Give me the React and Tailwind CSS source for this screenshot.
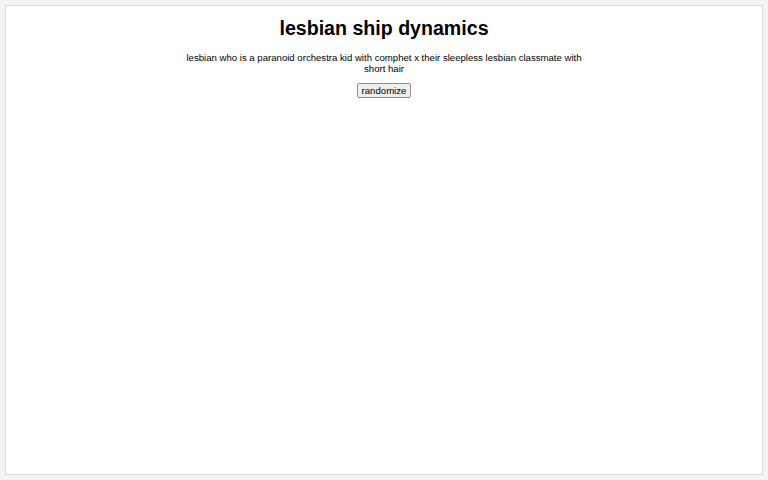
import React, { useState } from "react";

const traits = [
  "paranoid orchestra kid with comphet",
  "sleepless lesbian classmate with short hair",
];

export default function App() {
  const [pair] = useState(traits);
  const line = `lesbian who is a ${pair[0]} x their ${pair[1]}`;

  return (
    <div className="h-[480px] bg-[#f3f3f3] p-[5px] font-['Liberation_Sans',Arial,sans-serif] text-black">
      <div className="flex h-full flex-col items-center border border-[#dcdcdc] bg-white pt-[10px]">
        <h1 className="text-[19.6px] font-bold leading-[24px]">lesbian ship dynamics</h1>
        <p className="mt-[12px] w-[410px] text-center text-[9.6px] leading-[11px]">{line}</p>
        <button className="mt-[9px] rounded-[2px] border border-[#8f8f8f] bg-[#efefef] px-[4px] text-[9.6px] leading-[13px]">
          randomize
        </button>
      </div>
    </div>
  );
}
